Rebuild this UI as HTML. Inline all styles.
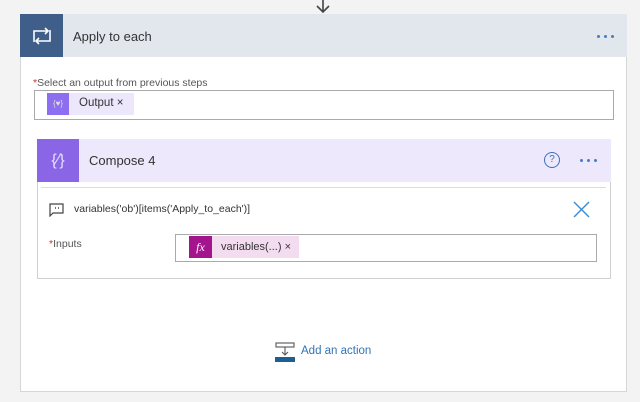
<!DOCTYPE html>
<html><head><style>
*{box-sizing:border-box;margin:0;padding:0}
body{width:640px;height:402px;background:#f3f3f3;font-family:"Liberation Sans",sans-serif;position:relative;overflow:hidden;color:#333}
.a{position:absolute}
.d{position:absolute;width:3px;height:3px;border-radius:50%;background:#4a7cc4}
</style></head><body>
<svg class="a" style="left:313px;top:0" width="20" height="14"><path d="M10 0V12M4 6L10 12L16 6" stroke="#444" stroke-width="1.6" fill="none"/></svg>
<div class="a" style="left:20px;top:14px;width:607px;height:378px;background:#fff;border:1px solid #d6d6d6"></div>
<div class="a" style="left:20px;top:14px;width:607px;height:43px;background:#e2e7ee"></div>
<div class="a" style="left:20px;top:14px;width:43px;height:43px;background:#3f5f8a"></div>
<svg class="a" style="left:31px;top:27px" width="22" height="18"><path d="M3 15V4H17M14 1L17 4L14 7M19 3V14H5M8 11L5 14L8 17" stroke="#fff" stroke-width="1.6" fill="none"/></svg>
<div class="a" style="left:73px;top:29px;font-size:13px;color:#333">Apply to each</div>
<div class="d" style="left:597px;top:35px"></div><div class="d" style="left:604px;top:35px"></div><div class="d" style="left:611px;top:35px"></div>
<div class="a" style="left:33px;top:77px;font-size:10.5px;color:#555"><span style="color:#c33">*</span>Select an output from previous steps</div>
<div class="a" style="left:34px;top:90px;width:580px;height:30px;border:1px solid #aaa;background:#fff"></div>
<div class="a" style="left:47px;top:93px;width:87px;height:22px;background:#ece7fb"></div>
<div class="a" style="left:47px;top:93px;width:22px;height:22px;background:#8d6ef0;color:#ddd;font-size:8px;text-align:center;line-height:22px">{♥}</div>
<div class="a" style="left:79px;top:97px;font-size:11.5px;color:#333">Output ×</div>
<div class="a" style="left:37px;top:139px;width:574px;height:140px;border:1px solid #d0d0d0;background:#fff"></div>
<div class="a" style="left:37px;top:139px;width:574px;height:43px;background:#ede8fb"></div>
<div class="a" style="left:37px;top:139px;width:42px;height:43px;background:#8a66e6;color:#e8e0ff;font-size:16px;text-align:center;line-height:43px">{∕}</div>
<div class="a" style="left:89px;top:153px;font-size:13px;color:#333">Compose 4</div>
<div class="a" style="left:544px;top:152px;width:16px;height:16px;border:1.3px solid #3f6fc0;border-radius:50%;font-size:10px;color:#3f6fc0;text-align:center;line-height:14px">?</div>
<div class="d" style="left:580px;top:159px"></div><div class="d" style="left:587px;top:159px"></div><div class="d" style="left:594px;top:159px"></div>
<div class="a" style="left:41px;top:187px;width:565px;height:1px;background:#ddd"></div>
<svg class="a" style="left:49px;top:203px" width="16" height="14"><path d="M1 1H14V10H4L1 13Z" stroke="#444" stroke-width="1.2" fill="none"/><path d="M6 5H7M9 5H10" stroke="#444" stroke-width="1.4"/></svg>
<div class="a" style="left:74px;top:203px;font-size:10.5px;color:#333">variables('ob')[items('Apply_to_each')]</div>
<svg class="a" style="left:573px;top:201px" width="17" height="17"><path d="M1 1L16 16M16 1L1 16" stroke="#3a8fd8" stroke-width="1.5"/></svg>
<div class="a" style="left:49px;top:238px;font-size:10.5px;color:#555"><span style="color:#c33">*</span>Inputs</div>
<div class="a" style="left:175px;top:234px;width:422px;height:28px;border:1px solid #aaa;background:#fff"></div>
<div class="a" style="left:189px;top:236px;width:110px;height:22px;background:#f3dcef"></div>
<div class="a" style="left:189px;top:236px;width:23px;height:22px;background:#a3148d;color:#fff;font-family:'Liberation Serif',serif;font-style:italic;font-size:12px;text-align:center;line-height:22px">fx</div>
<div class="a" style="left:221px;top:241px;font-size:11px;color:#333">variables(...) ×</div>
<svg class="a" style="left:275px;top:342px" width="20" height="20"><rect x="1" y="1" width="18" height="4" fill="none" stroke="#555" stroke-width="1.1"/><path d="M10 5V13M7 10L10 13L13 10" stroke="#555" stroke-width="1.1" fill="none"/><rect x="0" y="15" width="20" height="5" fill="#1f5f8f"/></svg>
<div class="a" style="left:301px;top:345px;font-size:11.5px;color:#2f74b5">Add an action</div>
</body></html>
